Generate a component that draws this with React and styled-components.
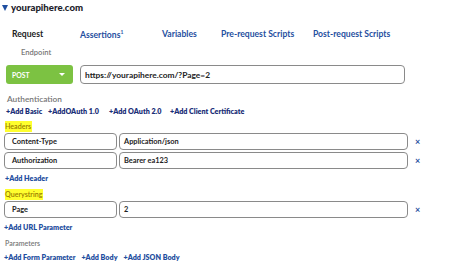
import React from "react";
import styled, { createGlobalStyle } from "styled-components";

const Global = createGlobalStyle`
  html, body { margin: 0; padding: 0; background: #fff; }
  body { font-family: Lato, "Noto Sans", sans-serif; color: #222; }
  * { box-sizing: border-box; }
`;

const Page = styled.div`
  width: 474px;
  height: 266px;
  overflow: hidden;
  display: flex;
  flex-direction: column;
`;

const Title = styled.div`
  display: flex;
  align-items: center;
  gap: 3px;
  padding-left: 2px;
  height: 14px;
  font-size: 9.6px;
  font-weight: 900;
  color: #1c1c2a;
`;

const Caret = styled.span`
  display: inline-block;
  width: 0;
  height: 0;
  border-left: 3.5px solid transparent;
  border-right: 3.5px solid transparent;
  border-top: 6px solid #1f4fa0;
  margin-top: 1px;
`;

const Tabs = styled.div`
  display: flex;
  padding-left: 12px;
  margin-top: 13px;
  height: 14px;
  align-items: center;
`;

const Tab = styled.div`
  width: ${(p) => p.$w}px;
  flex: none;
  font-size: 8.6px;
  font-weight: 700;
  color: ${(p) => (p.$active ? "#222" : "#1f4fa0")};
  white-space: nowrap;
  sup { font-size: 5px; vertical-align: 4px; }
`;

const SubLabel = styled.div`
  font-size: ${(p) => p.$fs ?? 8.3}px;
  font-weight: 600;
  color: #777;
  padding-left: ${(p) => p.$indent ?? 5}px;
  margin-top: ${(p) => p.$mt ?? 0}px;
  height: ${(p) => p.$h ?? 12}px;
  line-height: ${(p) => p.$h ?? 12}px;
`;

const EndpointRow = styled.div`
  display: flex;
  align-items: center;
  gap: 7px;
  padding-left: 6px;
  margin-top: 7px;
  height: 19px;
`;

const MethodSelect = styled.div`
  width: 67px;
  height: 19px;
  border-radius: 3px;
  background: #7cc242;
  color: #fff;
  font-size: 6.8px;
  font-weight: 700;
  display: flex;
  align-items: center;
  justify-content: space-between;
  padding: 0 8px 0 6px;
`;

const Chevron = styled.span`
  width: 0;
  height: 0;
  border-left: 3.5px solid transparent;
  border-right: 3.5px solid transparent;
  border-top: 3.5px solid #fff;
`;

const Field = styled.div`
  width: ${(p) => p.$w}px;
  height: ${(p) => p.$h ?? 17}px;
  border: 1.3px solid #8a8a8a;
  border-radius: 4px;
  background: #fff;
  display: flex;
  align-items: center;
  padding-left: ${(p) => p.$pl ?? 6}px;
  font-size: ${(p) => p.$fs ?? 7.4}px;
  font-weight: 700;
  color: #222;
  white-space: nowrap;
`;

const LinkRow = styled.div`
  display: flex;
  gap: ${(p) => p.$gap ?? 6}px;
  padding-left: ${(p) => p.$indent ?? 6}px;
  margin-top: ${(p) => p.$mt ?? 0}px;
  height: 10px;
  align-items: center;
`;

const Link = styled.span`
  font-size: 7.2px;
  font-weight: 800;
  color: ${(p) => (p.$navy ? "#1b2f78" : "#1f4fa0")};
  white-space: nowrap;
  width: ${(p) => (p.$w ? `${p.$w}px` : "auto")};
  flex: none;
`;

const Highlight = styled.div`
  margin-top: ${(p) => p.$mt ?? 0}px;
  padding-left: 5px;
  height: 11px;
  display: flex;
`;

const Mark = styled.span`
  background: #ffff2e;
  color: #9a7d00;
  font-size: 7.1px;
  font-weight: 600;
  line-height: 11px;
  padding: 0 1px 0 0;
`;

const Pair = styled.div`
  display: flex;
  align-items: center;
  gap: 2px;
  padding-left: 4px;
  margin-top: ${(p) => p.$mt ?? 0}px;
  height: 17px;
`;

const Remove = styled.span`
  margin-left: 5px;
  font-size: 9px;
  font-weight: 700;
  color: #1f4fa0;
  line-height: 1;
`;

const Row = ({ k, v, mt }) => (
  <Pair $mt={mt}>
    <Field $w={113} $pl={7}>{k}</Field>
    <Field $w={289} $pl={4}>{v}</Field>
    <Remove>×</Remove>
  </Pair>
);

export default function App() {
  return (
    <Page>
      <Global />
      <Title>
        <Caret />
        yourapihere.com
      </Title>
      <Tabs>
        <Tab $w={68} $active>Request</Tab>
        <Tab $w={82}>Assertions<sup>1</sup></Tab>
        <Tab $w={59}>Variables</Tab>
        <Tab $w={92}>Pre-request Scripts</Tab>
        <Tab $w={90}>Post-request Scripts</Tab>
      </Tabs>
      <SubLabel $indent={21} $mt={5} $fs={7.6}>Endpoint</SubLabel>
      <EndpointRow>
        <MethodSelect>
          POST
          <Chevron />
        </MethodSelect>
        <Field $w={325} $h={19} $pl={4} $fs={8.4}>https://yourapihere.com/?Page=2</Field>
      </EndpointRow>
      <SubLabel $indent={7} $mt={9}>Authentication</SubLabel>
      <LinkRow $indent={6} $gap={0} $mt={1}>
        <Link $navy $w={42}>+Add Basic</Link>
        <Link $navy $w={61}>+AddOAuth 1.0</Link>
        <Link $navy $w={61}>+Add OAuth 2.0</Link>
        <Link $navy>+Add Client Certificate</Link>
      </LinkRow>
      <Highlight $mt={5}><Mark>Headers</Mark></Highlight>
      <Row k="Content-Type" v="Application/json" mt={1} />
      <Row k="Authorization" v="Bearer ea123" mt={2} />
      <LinkRow $indent={5} $mt={4}>
        <Link>+Add Header</Link>
      </LinkRow>
      <Highlight $mt={6}><Mark>Querystring</Mark></Highlight>
      <Row k="Page" v="2" mt={1} />
      <LinkRow $indent={4} $mt={4}>
        <Link>+Add URL Parameter</Link>
      </LinkRow>
      <SubLabel $indent={5} $mt={6} $h={10} $fs={7}>Parameters</SubLabel>
      <LinkRow $indent={4} $gap={6} $mt={4}>
        <Link>+Add Form Parameter</Link>
        <Link>+Add Body</Link>
        <Link>+Add JSON Body</Link>
      </LinkRow>
    </Page>
  );
}
